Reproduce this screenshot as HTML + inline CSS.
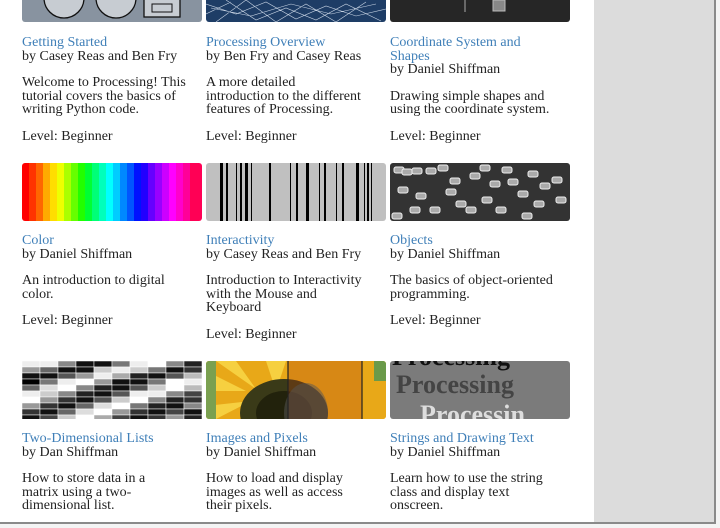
<!DOCTYPE html>
<html><head><meta charset="utf-8"><style>
*{margin:0;padding:0;box-sizing:border-box}
body{width:720px;height:528px;background:#f4f4f4;position:relative;overflow:hidden;font-family:"Liberation Serif",serif;font-size:14px;line-height:13.5px;color:#222}
#page{position:absolute;left:0;top:0;width:716px;height:524px;background:#fff;border-right:2px solid #8a8a8a;border-bottom:2px solid #8a8a8a;overflow:hidden}
#side{position:absolute;left:594px;top:0;width:120px;height:522px;background:#dcdcdc}
.img{position:absolute;width:180px;height:58px;border-radius:3px;overflow:hidden}
.txt{position:absolute;width:180px;white-space:nowrap}
.t{color:#3f7fb8}
.p{margin-top:13px}
svg{display:block}
</style></head><body>
<div id="page">
<div id="side"></div>

<div class="img" style="left:22px;top:-36px;background:#8893a0">
<svg width="180" height="58"><circle cx="42" cy="34" r="20" fill="#c7ccd2" stroke="#111" stroke-width="1.3"/><circle cx="94" cy="34" r="20" fill="#c7ccd2" stroke="#111" stroke-width="1.3"/><rect x="122" y="20" width="36" height="33" fill="#c7ccd2" stroke="#111" stroke-width="1.3"/><rect x="130" y="40" width="20" height="8" fill="none" stroke="#111"/></svg></div>
<div class="img" style="left:206px;top:-36px;background:#1e3d66">
<svg width="180" height="58" stroke="#c8d4e4" stroke-width="0.6" fill="none"><path d="M0 40L30 50L60 38L90 55L120 42L150 52L180 45M10 58L40 36L70 58L100 40L130 58L160 38M20 36L50 56L80 44L110 56L140 40L175 57M0 50L25 38M5 44L45 52L85 40L125 50L170 40"/></svg></div>
<div class="img" style="left:390px;top:-36px;background:#262626">
<svg width="180" height="58"><line x1="75" y1="36" x2="75" y2="48" stroke="#aaa"/><rect x="103" y="36" width="12" height="11" fill="#888" stroke="#bbb"/></svg></div>

<div class="txt" style="left:22px;top:36px"><div class="t">Getting Started</div>by Casey Reas and Ben Fry<div class="p">Welcome to Processing! This<br>tutorial covers the basics of<br>writing Python code.</div><div class="p">Level: Beginner</div></div>
<div class="txt" style="left:206px;top:36px"><div class="t">Processing Overview</div>by Ben Fry and Casey Reas<div class="p">A more detailed<br>introduction to the different<br>features of Processing.</div><div class="p">Level: Beginner</div></div>
<div class="txt" style="left:390px;top:36px"><div class="t">Coordinate System and<br>Shapes</div>by Daniel Shiffman<div class="p">Drawing simple shapes and<br>using the coordinate system.</div><div class="p">Level: Beginner</div></div>

<div class="img" style="left:22px;top:163px">
<svg width="180" height="58">
<rect x="0" width="8" height="58" fill="#ff0000"/><rect x="7" width="8" height="58" fill="#ff3300"/><rect x="14" width="8" height="58" fill="#ff6600"/><rect x="21" width="8" height="58" fill="#ffaa00"/><rect x="28" width="8" height="58" fill="#ffdd00"/><rect x="35" width="8" height="58" fill="#eeff00"/><rect x="42" width="8" height="58" fill="#aaff00"/><rect x="49" width="8" height="58" fill="#66ff00"/><rect x="56" width="8" height="58" fill="#22ff00"/><rect x="63" width="8" height="58" fill="#00ff33"/><rect x="70" width="8" height="58" fill="#00ff77"/><rect x="77" width="8" height="58" fill="#00ffbb"/><rect x="84" width="8" height="58" fill="#00ffff"/><rect x="91" width="8" height="58" fill="#00ccff"/><rect x="98" width="8" height="58" fill="#0088ff"/><rect x="105" width="8" height="58" fill="#0055ff"/><rect x="112" width="8" height="58" fill="#0011ff"/><rect x="119" width="8" height="58" fill="#2200ff"/><rect x="126" width="8" height="58" fill="#6600ff"/><rect x="133" width="8" height="58" fill="#9900ff"/><rect x="140" width="8" height="58" fill="#cc00ff"/><rect x="147" width="8" height="58" fill="#ff00ff"/><rect x="154" width="8" height="58" fill="#ff00cc"/><rect x="161" width="8" height="58" fill="#ff0099"/><rect x="168" width="12" height="58" fill="#ff0055"/></svg></div>
<div class="img" style="left:206px;top:163px;background:#c0c0c0">
<svg width="180" height="58" fill="#000"><rect x="14" width="3" height="58"/><rect x="20" width="2" height="58"/><rect x="30" width="1" height="58"/><rect x="34" width="2" height="58"/><rect x="39" width="3" height="58"/><rect x="45" width="1" height="58"/><rect x="63" width="2" height="58"/><rect x="84" width="1" height="58"/><rect x="90" width="2" height="58"/><rect x="100" width="3" height="58"/><rect x="113" width="1" height="58"/><rect x="118" width="2" height="58"/><rect x="130" width="1" height="58"/><rect x="136" width="2" height="58"/><rect x="150" width="3" height="58"/><rect x="158" width="1" height="58"/><rect x="161" width="2" height="58"/><rect x="165" width="1" height="58"/></svg></div>
<div class="img" style="left:390px;top:163px;background:#333">
<svg width="180" height="58" fill="#aaa" stroke="#eee" stroke-width="1"><rect x="4" y="4" width="10" height="6" rx="2"/><rect x="12" y="6" width="10" height="6" rx="2"/><rect x="22" y="5" width="10" height="6" rx="2"/><rect x="36" y="5" width="10" height="6" rx="2"/><rect x="48" y="2" width="10" height="6" rx="2"/><rect x="60" y="15" width="10" height="6" rx="2"/><rect x="8" y="24" width="10" height="6" rx="2"/><rect x="26" y="30" width="10" height="6" rx="2"/><rect x="2" y="50" width="10" height="6" rx="2"/><rect x="20" y="44" width="10" height="6" rx="2"/><rect x="40" y="44" width="10" height="6" rx="2"/><rect x="56" y="26" width="10" height="6" rx="2"/><rect x="66" y="38" width="10" height="6" rx="2"/><rect x="80" y="10" width="10" height="6" rx="2"/><rect x="90" y="2" width="10" height="6" rx="2"/><rect x="100" y="18" width="10" height="6" rx="2"/><rect x="76" y="44" width="10" height="6" rx="2"/><rect x="92" y="34" width="10" height="6" rx="2"/><rect x="112" y="4" width="10" height="6" rx="2"/><rect x="118" y="16" width="10" height="6" rx="2"/><rect x="106" y="44" width="10" height="6" rx="2"/><rect x="128" y="28" width="10" height="6" rx="2"/><rect x="138" y="8" width="10" height="6" rx="2"/><rect x="150" y="20" width="10" height="6" rx="2"/><rect x="162" y="14" width="10" height="6" rx="2"/><rect x="144" y="38" width="10" height="6" rx="2"/><rect x="166" y="34" width="10" height="6" rx="2"/><rect x="132" y="50" width="10" height="6" rx="2"/></svg></div>

<div class="txt" style="left:22px;top:234px"><div class="t">Color</div>by Daniel Shiffman<div class="p">An introduction to digital<br>color.</div><div class="p">Level: Beginner</div></div>
<div class="txt" style="left:206px;top:234px"><div class="t">Interactivity</div>by Casey Reas and Ben Fry<div class="p">Introduction to Interactivity<br>with the Mouse and<br>Keyboard</div><div class="p">Level: Beginner</div></div>
<div class="txt" style="left:390px;top:234px"><div class="t">Objects</div>by Daniel Shiffman<div class="p">The basics of object-oriented<br>programming.</div><div class="p">Level: Beginner</div></div>

<div class="img" style="left:22px;top:361px;border-radius:0">
<svg width="180" height="58" stroke="#fff" stroke-width="0.5">
<rect x="0" y="0" width="18" height="6" fill="#eee"/><rect x="18" y="0" width="18" height="6" fill="#eee"/><rect x="36" y="0" width="18" height="6" fill="#888"/><rect x="54" y="0" width="18" height="6" fill="#111"/><rect x="72" y="0" width="18" height="6" fill="#111"/><rect x="90" y="0" width="18" height="6" fill="#777"/><rect x="108" y="0" width="18" height="6" fill="#eee"/><rect x="126" y="0" width="18" height="6" fill="#fff"/><rect x="144" y="0" width="18" height="6" fill="#888"/><rect x="162" y="0" width="18" height="6" fill="#222"/>
<rect x="0" y="6" width="18" height="6" fill="#999"/><rect x="18" y="6" width="18" height="6" fill="#666"/><rect x="36" y="6" width="18" height="6" fill="#111"/><rect x="54" y="6" width="18" height="6" fill="#111"/><rect x="72" y="6" width="18" height="6" fill="#ccc"/><rect x="90" y="6" width="18" height="6" fill="#eee"/><rect x="108" y="6" width="18" height="6" fill="#ccc"/><rect x="126" y="6" width="18" height="6" fill="#777"/><rect x="144" y="6" width="18" height="6" fill="#111"/><rect x="162" y="6" width="18" height="6" fill="#333"/>
<rect x="0" y="12" width="18" height="6" fill="#111"/><rect x="18" y="12" width="18" height="6" fill="#111"/><rect x="36" y="12" width="18" height="6" fill="#555"/><rect x="54" y="12" width="18" height="6" fill="#999"/><rect x="72" y="12" width="18" height="6" fill="#eee"/><rect x="90" y="12" width="18" height="6" fill="#aaa"/><rect x="108" y="12" width="18" height="6" fill="#222"/><rect x="126" y="12" width="18" height="6" fill="#111"/><rect x="144" y="12" width="18" height="6" fill="#555"/><rect x="162" y="12" width="18" height="6" fill="#bbb"/>
<rect x="0" y="18" width="18" height="6" fill="#000"/><rect x="18" y="18" width="18" height="6" fill="#777"/><rect x="36" y="18" width="18" height="6" fill="#eee"/><rect x="54" y="18" width="18" height="6" fill="#fff"/><rect x="72" y="18" width="18" height="6" fill="#999"/><rect x="90" y="18" width="18" height="6" fill="#111"/><rect x="108" y="18" width="18" height="6" fill="#111"/><rect x="126" y="18" width="18" height="6" fill="#777"/><rect x="144" y="18" width="18" height="6" fill="#fff"/><rect x="162" y="18" width="18" height="6" fill="#eee"/>
<rect x="0" y="24" width="18" height="6" fill="#666"/><rect x="18" y="24" width="18" height="6" fill="#ddd"/><rect x="36" y="24" width="18" height="6" fill="#fff"/><rect x="54" y="24" width="18" height="6" fill="#888"/><rect x="72" y="24" width="18" height="6" fill="#222"/><rect x="90" y="24" width="18" height="6" fill="#111"/><rect x="108" y="24" width="18" height="6" fill="#555"/><rect x="126" y="24" width="18" height="6" fill="#ccc"/><rect x="144" y="24" width="18" height="6" fill="#fff"/><rect x="162" y="24" width="18" height="6" fill="#bbb"/>
<rect x="0" y="30" width="18" height="6" fill="#eee"/><rect x="18" y="30" width="18" height="6" fill="#ccc"/><rect x="36" y="30" width="18" height="6" fill="#888"/><rect x="54" y="30" width="18" height="6" fill="#222"/><rect x="72" y="30" width="18" height="6" fill="#111"/><rect x="90" y="30" width="18" height="6" fill="#555"/><rect x="108" y="30" width="18" height="6" fill="#eee"/><rect x="126" y="30" width="18" height="6" fill="#eee"/><rect x="144" y="30" width="18" height="6" fill="#888"/><rect x="162" y="30" width="18" height="6" fill="#444"/>
<rect x="0" y="36" width="18" height="6" fill="#fff"/><rect x="18" y="36" width="18" height="6" fill="#999"/><rect x="36" y="36" width="18" height="6" fill="#333"/><rect x="54" y="36" width="18" height="6" fill="#111"/><rect x="72" y="36" width="18" height="6" fill="#555"/><rect x="90" y="36" width="18" height="6" fill="#ccc"/><rect x="108" y="36" width="18" height="6" fill="#fff"/><rect x="126" y="36" width="18" height="6" fill="#888"/><rect x="144" y="36" width="18" height="6" fill="#222"/><rect x="162" y="36" width="18" height="6" fill="#333"/>
<rect x="0" y="42" width="18" height="6" fill="#999"/><rect x="18" y="42" width="18" height="6" fill="#333"/><rect x="36" y="42" width="18" height="6" fill="#111"/><rect x="54" y="42" width="18" height="6" fill="#666"/><rect x="72" y="42" width="18" height="6" fill="#ddd"/><rect x="90" y="42" width="18" height="6" fill="#fff"/><rect x="108" y="42" width="18" height="6" fill="#777"/><rect x="126" y="42" width="18" height="6" fill="#222"/><rect x="144" y="42" width="18" height="6" fill="#111"/><rect x="162" y="42" width="18" height="6" fill="#888"/>
<rect x="0" y="48" width="18" height="6" fill="#333"/><rect x="18" y="48" width="18" height="6" fill="#111"/><rect x="36" y="48" width="18" height="6" fill="#666"/><rect x="54" y="48" width="18" height="6" fill="#ddd"/><rect x="72" y="48" width="18" height="6" fill="#fff"/><rect x="90" y="48" width="18" height="6" fill="#999"/><rect x="108" y="48" width="18" height="6" fill="#333"/><rect x="126" y="48" width="18" height="6" fill="#111"/><rect x="144" y="48" width="18" height="6" fill="#444"/><rect x="162" y="48" width="18" height="6" fill="#111"/>
<rect x="0" y="54" width="18" height="6" fill="#111"/><rect x="18" y="54" width="18" height="6" fill="#444"/><rect x="36" y="54" width="18" height="6" fill="#ccc"/><rect x="54" y="54" width="18" height="6" fill="#fff"/><rect x="72" y="54" width="18" height="6" fill="#aaa"/><rect x="90" y="54" width="18" height="6" fill="#444"/><rect x="108" y="54" width="18" height="6" fill="#111"/><rect x="126" y="54" width="18" height="6" fill="#333"/><rect x="144" y="54" width="18" height="6" fill="#999"/><rect x="162" y="54" width="18" height="6" fill="#222"/>
</svg></div>
<div class="img" style="left:206px;top:361px;background:#e8b020">
<svg width="180" height="58"><rect width="180" height="58" fill="#e8a818"/><path d="M0 10L40 30L0 30ZM10 0L50 28L30 0ZM0 45L45 40L10 58ZM60 0L70 30L80 0Z" fill="#f6d040"/><rect x="0" y="0" width="10" height="58" fill="#7aa050"/><rect x="168" y="0" width="12" height="20" fill="#6a9a4a"/><ellipse cx="78" cy="52" rx="44" ry="34" fill="#3a3a18"/><ellipse cx="78" cy="52" rx="28" ry="22" fill="#22220c"/><rect x="82" y="0" width="74" height="58" fill="#b04010" opacity="0.3"/><ellipse cx="100" cy="52" rx="22" ry="30" fill="#555" opacity="0.5"/><line x1="82" y1="0" x2="82" y2="58" stroke="#222" stroke-width="1.2"/><line x1="156" y1="0" x2="156" y2="58" stroke="#222" stroke-width="1.2"/></svg></div>
<div class="img" style="left:390px;top:361px;background:#7b7b7b">
<svg width="180" height="58"><text x="2" y="4" font-family="Liberation Serif" font-weight="bold" font-size="26" fill="#111">Processing</text><text x="6" y="32" font-family="Liberation Serif" font-weight="bold" font-size="26" fill="#444">Processing</text><text x="30" y="62" font-family="Liberation Serif" font-weight="bold" font-size="26" fill="#ddd">Processin</text></svg></div>

<div class="txt" style="left:22px;top:432px"><div class="t">Two-Dimensional Lists</div>by Dan Shiffman<div class="p">How to store data in a<br>matrix using a two-<br>dimensional list.</div></div>
<div class="txt" style="left:206px;top:432px"><div class="t">Images and Pixels</div>by Daniel Shiffman<div class="p">How to load and display<br>images as well as access<br>their pixels.</div></div>
<div class="txt" style="left:390px;top:432px"><div class="t">Strings and Drawing Text</div>by Daniel Shiffman<div class="p">Learn how to use the string<br>class and display text<br>onscreen.</div></div>
</div>
</body></html>
